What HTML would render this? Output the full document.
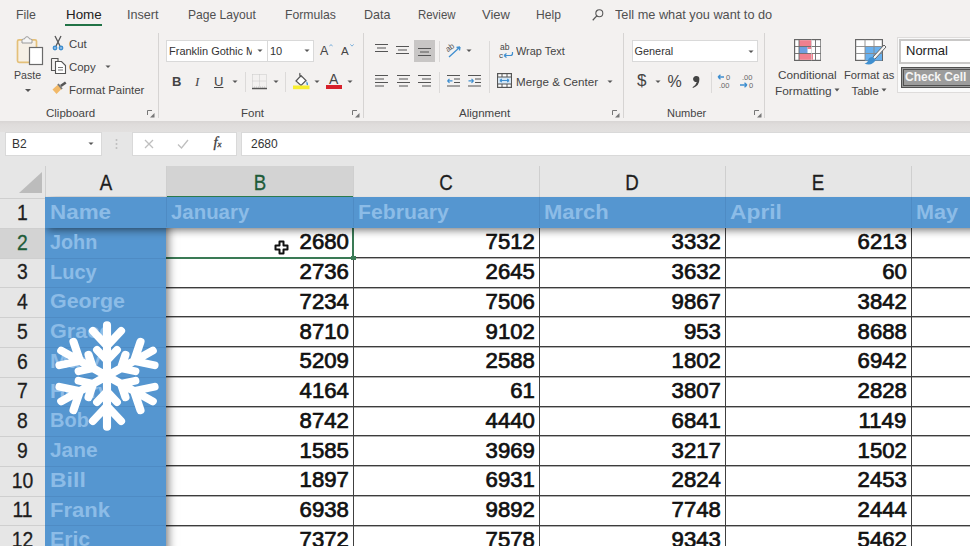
<!DOCTYPE html>
<html>
<head>
<meta charset="utf-8">
<title>Excel</title>
<style>
*{box-sizing:border-box;margin:0;padding:0}
html,body{width:970px;height:546px;overflow:hidden}
body{font-family:"Liberation Sans",sans-serif;background:#f3f1f0;position:relative;color:#444}
.abs{position:absolute}
.t{position:absolute;white-space:nowrap;line-height:1}
.tab{font-size:13px;color:#505050;top:8px;transform-origin:left center}
.rl{font-size:11.4px;color:#444}
.gl{font-size:11.5px;color:#444;top:108px}
.sep{position:absolute;top:33px;height:84.5px;width:1px;background:#d6d4d3}
.box{position:absolute;background:#fff;border:1px solid #d9d9d9}
.chl{font-size:21.5px;width:40px;text-align:center;transform:scaleX(.87);-webkit-text-stroke:.3px}
.rhl{font-size:22px;left:0;width:45px;text-align:center;transform:scaleX(.88);-webkit-text-stroke:.3px}
.num{font-size:21.5px;font-weight:normal;color:#111;-webkit-text-stroke:0.7px #111;transform:scaleX(1.03);transform-origin:right center}
.nm{font-size:20px;font-weight:bold;color:#8cbce7;transform-origin:left center}
</style>
</head>
<body>
<span class="t tab" style="left:16px;transform:scaleX(0.95)">File</span>
<span class="t tab" style="left:66px;color:#222;transform:scaleX(1.03)">Home</span>
<div class="abs" style="left:65px;top:24px;width:37px;height:2px;background:#217346"></div>
<span class="t tab" style="left:127px;transform:scaleX(0.97)">Insert</span>
<span class="t tab" style="left:188px;transform:scaleX(0.93)">Page Layout</span>
<span class="t tab" style="left:285px;transform:scaleX(0.94)">Formulas</span>
<span class="t tab" style="left:364px;transform:scaleX(0.96)">Data</span>
<span class="t tab" style="left:418px;transform:scaleX(0.88)">Review</span>
<span class="t tab" style="left:482px;transform:scaleX(1.00)">View</span>
<span class="t tab" style="left:536px;transform:scaleX(0.93)">Help</span>
<span class="t tab" style="left:615px;transform:scaleX(0.98)">Tell me what you want to do</span>
<!-- search icon -->
<svg class="abs" style="left:590.5px;top:7.5px" width="14" height="14" viewBox="0 0 16 16"><circle cx="9.5" cy="6" r="4" fill="none" stroke="#555" stroke-width="1.2"/><path d="M6.6 9 L2 14" stroke="#555" stroke-width="1.4"/></svg>

<!-- CLIPBOARD -->
<svg class="abs" style="left:15px;top:34px" width="30" height="33" viewBox="0 0 30 33">
<rect x="2.5" y="5.800" width="19" height="22.500" rx="1.500" fill="#f6f0e6" stroke="#e4c079" stroke-width="1.700"/>
<path d="M7 9 V6.500 Q7 5 8.500 5 H9.500 Q10 2.700 12 2.700 Q14 2.700 14.500 5 H15.500 Q17 5 17 6.500 V9 Z" fill="#f5f5f5" stroke="#9a9a9a" stroke-width="1"/>
<rect x="14.500" y="13.500" width="13" height="17" fill="#fff" stroke="#6a6a6a" stroke-width="1.200"/>
</svg>
<span class="t rl" style="left:14px;top:70px;transform:scaleX(.93);transform-origin:left">Paste</span>
<svg class="abs" style="left:24px;top:88px" width="8" height="5" viewBox="0 0 8 5"><path d="M1 1 L7 1 L4 4 Z" fill="#555"/></svg>

<svg class="abs" style="left:51px;top:35px" width="14" height="17" viewBox="0 0 14 17">
<path d="M4 1 L9 11 M10 1 L5 11" stroke="#555" stroke-width="1.300" fill="none"/>
<circle cx="4" cy="13" r="1.700" fill="#9cc4ea" stroke="#3f8fd0" stroke-width="1.400"/><circle cx="10" cy="13" r="1.700" fill="#9cc4ea" stroke="#3f8fd0" stroke-width="1.400"/>
</svg>
<span class="t rl" style="left:69px;top:38.5px">Cut</span>

<svg class="abs" style="left:50px;top:57px" width="17" height="18" viewBox="0 0 17 18">
<path d="M1.500 1.500 H8 V4 M1.500 1.500 V13.500 H5" fill="none" stroke="#555" stroke-width="1.100"/>
<path d="M5.500 4.500 H11.500 L15.500 8.500 V16.500 H5.500 Z" fill="#fff" stroke="#555" stroke-width="1.100"/>
<path d="M8 10.500 H13 M8 13 H13" stroke="#777" stroke-width="1"/>
</svg>
<span class="t rl" style="left:69px;top:61.5px">Copy</span>
<svg class="abs" style="left:104.5px;top:65.3px" width="6" height="3.4" viewBox="0 0 7 4"><path d="M0.500 0.500 L6.500 0.500 L3.500 3.500 Z" fill="#555"/></svg>

<svg class="abs" style="left:50px;top:80px" width="18" height="16" viewBox="0 0 18 16">
<path d="M10 5 L15 1.500 L16.500 3.500 L11.500 7 Z" fill="#555"/>
<path d="M2.500 9.500 L8 4.500 L11.500 9 L6.500 14 Z" fill="#f2b968"/>
<path d="M8 4 L12 9" stroke="#777" stroke-width="1.800"/>
</svg>
<span class="t rl" style="left:69px;top:84.5px">Format Painter</span>
<span class="t gl" style="left:46px">Clipboard</span>
<svg class="abs lch" style="left:147px;top:110px" width="8" height="8" viewBox="0 0 8 8"><path d="M0.500 5 V0.500 H5" fill="none" stroke="#777" stroke-width="1"/><path d="M3 7.500 H7.500 V3 Z" fill="#777"/></svg>
<div class="sep" style="left:158px"></div>

<!-- FONT -->
<div class="box" style="left:166px;top:40px;width:102px;height:22px"></div>
<div class="box" style="left:267px;top:40px;width:47px;height:22px"></div>
<span class="t rl" style="left:169px;top:46px;width:83px;overflow:hidden;font-size:11px;color:#333">Franklin Gothic M</span>
<svg class="abs" style="left:257px;top:49.3px" width="6" height="3.4" viewBox="0 0 7 4"><path d="M0.500 0.500 L6.500 0.500 L3.500 3.500 Z" fill="#555"/></svg>
<span class="t rl" style="left:270px;top:46px;font-size:11px;color:#333">10</span>
<svg class="abs" style="left:303.5px;top:49.3px" width="6" height="3.4" viewBox="0 0 7 4"><path d="M0.500 0.500 L6.500 0.500 L3.500 3.500 Z" fill="#555"/></svg>
<span class="t rl" style="left:320px;top:45px;font-size:12.5px">A</span>
<svg class="abs" style="left:328.5px;top:44px" width="4" height="2.7" viewBox="0 0 6 4"><path d="M0.500 3.500 L3 0.800 L5.500 3.500" fill="none" stroke="#3f8fd0" stroke-width="1"/></svg>
<span class="t rl" style="left:341px;top:46px;font-size:11.5px">A</span>
<svg class="abs" style="left:349.5px;top:44px" width="4" height="2.7" viewBox="0 0 6 4"><path d="M0.500 0.500 L3 3.200 L5.500 0.500" fill="none" stroke="#3f8fd0" stroke-width="1"/></svg>

<span class="t rl" style="left:172px;top:75px;font-size:13px;font-weight:bold">B</span>
<span class="t rl" style="left:195px;top:75px;font-size:13px;font-style:italic;font-family:'Liberation Serif',serif">I</span>
<span class="t rl" style="left:214px;top:75px;font-size:13px;text-decoration:underline">U</span>
<svg class="abs" style="left:231.5px;top:80.3px" width="6" height="3.4" viewBox="0 0 7 4"><path d="M0.500 0.500 L6.500 0.500 L3.500 3.500 Z" fill="#555"/></svg>
<div class="abs" style="left:245px;top:72px;width:1px;height:20px;background:#dcdad9"></div>
<svg class="abs" style="left:252px;top:74px" width="16" height="16" viewBox="0 0 16 16"><path d="M0.500 0.500 H14.500 V13 H0.500 Z M7.500 0.500 V13 M0.500 7 H14.500" fill="none" stroke="#c8c8c8" stroke-width="1" stroke-dasharray="1 1"/><path d="M0 14.500 H15" stroke="#555" stroke-width="1.500"/></svg>
<svg class="abs" style="left:272.5px;top:80.3px" width="6" height="3.4" viewBox="0 0 7 4"><path d="M0.500 0.500 L6.500 0.500 L3.500 3.500 Z" fill="#555"/></svg>
<div class="abs" style="left:285px;top:72px;width:1px;height:20px;background:#dcdad9"></div>
<svg class="abs" style="left:293px;top:72px" width="18" height="20" viewBox="0 0 18 20">
<path d="M3 9 L8 3.500 L13 8.500 L8 13.500 Z" fill="#fff" stroke="#555" stroke-width="1.200"/>
<path d="M7 1 Q6 4 8.500 5" fill="none" stroke="#555" stroke-width="1.100"/>
<path d="M13.500 9 Q16 12.500 14.500 13.500 Q13 13 13.500 9 Z" fill="#3f8fd0"/>
<rect x="0" y="13.500" width="16.500" height="3.700" fill="#f7ee2f"/>
</svg>
<svg class="abs" style="left:313.5px;top:80.3px" width="6" height="3.4" viewBox="0 0 7 4"><path d="M0.500 0.500 L6.500 0.500 L3.500 3.500 Z" fill="#555"/></svg>
<span class="t rl" style="left:329px;top:71.5px;font-size:14px">A</span>
<div class="abs" style="left:326px;top:85.2px;width:16px;height:3.700px;background:#d7202b"></div>
<svg class="abs" style="left:346.5px;top:80.3px" width="6" height="3.4" viewBox="0 0 7 4"><path d="M0.500 0.500 L6.500 0.500 L3.500 3.500 Z" fill="#555"/></svg>
<span class="t gl" style="left:241px">Font</span>
<svg class="abs lch" style="left:352px;top:110px" width="8" height="8" viewBox="0 0 8 8"><path d="M0.500 5 V0.500 H5" fill="none" stroke="#777" stroke-width="1"/><path d="M3 7.500 H7.500 V3 Z" fill="#777"/></svg>
<div class="sep" style="left:363px"></div>
<!-- ALIGNMENT -->
<div class="abs" style="left:414px;top:40px;width:21px;height:21.5px;background:#c8c6c5"></div>
<svg class="abs" style="left:375px;top:43px" width="14" height="14" viewBox="0 0 14 14"><path d="M0 1.500 H13 M2 5 H11 M0 8.500 H13" stroke="#555" stroke-width="1.200"/></svg>
<svg class="abs" style="left:396px;top:44px" width="14" height="14" viewBox="0 0 14 14"><path d="M0 2.500 H13 M2 6 H11 M0 9.500 H13" stroke="#555" stroke-width="1.200"/></svg>
<svg class="abs" style="left:418px;top:45px" width="14" height="14" viewBox="0 0 14 14"><path d="M0 3.500 H13 M2 7 H11 M0 10.500 H13" stroke="#555" stroke-width="1.200"/></svg>
<div class="abs" style="left:439px;top:41px;width:1px;height:21px;background:#dcdad9"></div>
<svg class="abs" style="left:446px;top:41px" width="18" height="18" viewBox="0 0 18 18">
<text x="1" y="9" font-family="Liberation Sans" font-size="8" fill="#555" transform="rotate(-35 5 9)">ab</text>
<path d="M3 16 L14 6 M14 6 L10.500 6.500 M14 6 L13.500 9.500" stroke="#3f8fd0" stroke-width="1.300" fill="none"/>
</svg>
<svg class="abs" style="left:465.5px;top:49.3px" width="6" height="3.4" viewBox="0 0 7 4"><path d="M0.500 0.500 L6.500 0.500 L3.500 3.500 Z" fill="#555"/></svg>
<div class="abs" style="left:489px;top:41px;width:1px;height:52px;background:#dcdad9"></div>
<svg class="abs" style="left:499px;top:42.5px" width="15" height="17" viewBox="0 0 15 17">
<text x="1" y="7" font-family="Liberation Sans" font-size="8.500" fill="#444">ab</text>
<text x="0" y="15" font-family="Liberation Sans" font-size="8" fill="#444">c</text>
<path d="M5 12.500 H11.500 Q13.500 12.500 13.500 10.500 V9 M5 12.500 L7.500 10.500 M5 12.500 L7.500 14.500" stroke="#3f8fd0" stroke-width="1.200" fill="none"/>
</svg>
<span class="t rl" style="left:515.5px;top:46.3px;transform:scaleX(.96);transform-origin:left">Wrap Text</span>

<svg class="abs" style="left:375px;top:74px" width="14" height="15" viewBox="0 0 14 15"><path d="M0 1.500 H13 M0 5 H9 M0 8.500 H13 M0 12 H9" stroke="#555" stroke-width="1.200"/></svg>
<svg class="abs" style="left:396.5px;top:74px" width="14" height="15" viewBox="0 0 14 15"><path d="M0 1.500 H13 M2 5 H11 M0 8.500 H13 M2 12 H11" stroke="#555" stroke-width="1.200"/></svg>
<svg class="abs" style="left:418px;top:74px" width="14" height="15" viewBox="0 0 14 15"><path d="M0 1.500 H13 M4 5 H13 M0 8.500 H13 M4 12 H13" stroke="#555" stroke-width="1.200"/></svg>
<div class="abs" style="left:439px;top:72px;width:1px;height:21px;background:#dcdad9"></div>
<svg class="abs" style="left:447px;top:74px" width="14" height="15" viewBox="0 0 14 15"><path d="M0 1.500 H13 M7 5 H13 M7 8.500 H13 M0 12 H13" stroke="#555" stroke-width="1.200"/><path d="M5.500 6.800 H0.500 M0.500 6.800 L2.500 4.800 M0.500 6.800 L2.500 8.800" stroke="#3f8fd0" stroke-width="1.200" fill="none"/></svg>
<svg class="abs" style="left:468px;top:74px" width="14" height="15" viewBox="0 0 14 15"><path d="M0 1.500 H13 M7 5 H13 M7 8.500 H13 M0 12 H13" stroke="#555" stroke-width="1.200"/><path d="M0.500 6.800 H5.500 M5.500 6.800 L3.500 4.800 M5.500 6.800 L3.500 8.800" stroke="#3f8fd0" stroke-width="1.200" fill="none"/></svg>
<svg class="abs" style="left:497px;top:73px" width="15" height="15" viewBox="0 0 15 15">
<rect x="0.600" y="0.600" width="13.800" height="13.800" fill="#fff" stroke="#555" stroke-width="1.200"/>
<rect x="1.200" y="4" width="12.600" height="7" fill="#d6e8f7"/>
<path d="M0.600 4 H14.400 M0.600 11 H14.400 M5 0.600 V4 M10 0.600 V4 M5 11 V14.400 M10 11 V14.400" stroke="#555" stroke-width="1"/>
<path d="M3 7.500 H12 M3 7.500 L4.800 6 M3 7.500 L4.800 9 M12 7.500 L10.200 6 M12 7.500 L10.200 9" stroke="#3f8fd0" stroke-width="1.100" fill="none"/>
</svg>
<span class="t rl" style="left:515.5px;top:76.5px;transform:scaleX(1.02);transform-origin:left">Merge &amp; Center</span>
<svg class="abs" style="left:606.5px;top:80.3px" width="6" height="3.4" viewBox="0 0 7 4"><path d="M0.500 0.500 L6.500 0.500 L3.500 3.500 Z" fill="#555"/></svg>
<span class="t gl" style="left:459px">Alignment</span>
<svg class="abs lch" style="left:611.5px;top:110px" width="8" height="8" viewBox="0 0 8 8"><path d="M0.500 5 V0.500 H5" fill="none" stroke="#777" stroke-width="1"/><path d="M3 7.500 H7.500 V3 Z" fill="#777"/></svg>
<div class="sep" style="left:623px"></div>

<!-- NUMBER -->
<div class="box" style="left:632px;top:40px;width:126px;height:22px"></div>
<span class="t rl" style="left:634.5px;top:46.3px;font-size:10.9px;color:#333">General</span>
<svg class="abs" style="left:747.5px;top:49.8px" width="6" height="3.4" viewBox="0 0 7 4"><path d="M0.500 0.500 L6.500 0.500 L3.500 3.500 Z" fill="#555"/></svg>
<span class="t rl" style="left:637px;top:72px;font-size:17px">$</span>
<svg class="abs" style="left:654.5px;top:80.3px" width="6" height="3.4" viewBox="0 0 7 4"><path d="M0.500 0.500 L6.500 0.500 L3.500 3.500 Z" fill="#555"/></svg>
<span class="t rl" style="left:667.5px;top:74px;font-size:16px">%</span>
<svg class="abs" style="left:690px;top:74px" width="12" height="16" viewBox="0 0 12 16"><path d="M6.300 2 A3 3 0 1 0 6.800 7.900 Q6 11 2.500 13.200 L3 14 Q9.500 11.500 9.400 5.200 A3.100 3.100 0 0 0 6.300 2 Z" fill="#444"/></svg>
<div class="abs" style="left:711px;top:72px;width:1px;height:21px;background:#dcdad9"></div>
<svg class="abs" style="left:717px;top:73px" width="17" height="17" viewBox="0 0 17 17">
<path d="M1 4 H7 M1 4 L3.500 1.800 M1 4 L3.500 6.200" stroke="#3f8fd0" stroke-width="1.300" fill="none"/>
<text x="9" y="7" font-family="Liberation Sans" font-size="7.500" fill="#666">0</text>
<text x="2" y="15" font-family="Liberation Sans" font-size="7.500" fill="#666">.00</text>
</svg>
<svg class="abs" style="left:739px;top:73px" width="17" height="17" viewBox="0 0 17 17">
<text x="3" y="7" font-family="Liberation Sans" font-size="7.500" fill="#666">.00</text>
<path d="M1 12 H8 M8 12 L5.500 9.800 M8 12 L5.500 14.200" stroke="#3f8fd0" stroke-width="1.300" fill="none"/>
<text x="10" y="15" font-family="Liberation Sans" font-size="7.500" fill="#666">0</text>
</svg>
<span class="t gl" style="left:666.5px;transform:scaleX(.96);transform-origin:left">Number</span>
<svg class="abs lch" style="left:753.5px;top:110px" width="8" height="8" viewBox="0 0 8 8"><path d="M0.500 5 V0.500 H5" fill="none" stroke="#777" stroke-width="1"/><path d="M3 7.500 H7.500 V3 Z" fill="#777"/></svg>
<div class="sep" style="left:764px"></div>

<!-- STYLES -->
<svg class="abs" style="left:793.5px;top:39px" width="27.5" height="22" viewBox="0 0 27.5 22">
<rect x="0.600" y="0.600" width="26.300" height="20.800" fill="#fff" stroke="#666" stroke-width="1.200"/>
<rect x="5" y="1.200" width="12.500" height="6.300" fill="#f0808f"/>
<rect x="5" y="7.500" width="8.500" height="7" fill="#6f9fe0"/>
<rect x="13.500" y="7.500" width="4" height="2.500" fill="#f0808f"/>
<rect x="5" y="14.500" width="14" height="6.300" fill="#f0808f"/>
<path d="M5 0.600 V21.400 M21.500 0.600 V21.400 M0.600 7.500 H26.900 M0.600 14.500 H26.900" stroke="#6a6a6a" stroke-width="0.900" fill="none"/>
<path d="M17.500 0.600 V21.400" stroke="#d0d0d0" stroke-width="0.700"/>
</svg>
<span class="t rl" style="left:777.5px;top:70px;transform:scaleX(1.03);transform-origin:left">Conditional</span>
<span class="t rl" style="left:774.5px;top:86px;transform:scaleX(1.04);transform-origin:left">Formatting</span>
<svg class="abs" style="left:833.5px;top:88px" width="6" height="4" viewBox="0 0 6 4"><path d="M0.500 0.500 L5.500 0.500 L3 3.500 Z" fill="#555"/></svg>
<svg class="abs" style="left:855px;top:39px" width="32" height="27" viewBox="0 0 32 27">
<rect x="0.600" y="0.600" width="26.800" height="20.800" fill="#fff" stroke="#666" stroke-width="1.200"/>
<rect x="10" y="7.500" width="17" height="14" fill="#68b0ee"/>
<path d="M10 0.600 V21.400 M19 0.600 V21.400 M0.600 7.500 H27.400 M0.600 14.500 H27.400" stroke="#888" stroke-width="0.900" fill="none"/>
<path d="M29 6 L31 8 L20 20 L17 21 L18 18 Z" fill="#f5f5f5" stroke="#666" stroke-width="1"/>
<path d="M18 18 Q13 18 13 22 Q11 25 9 24 Q14 27 18 24 Q21 22 20 20 Z" fill="#3f8fd0"/>
</svg>
<span class="t rl" style="left:843.5px;top:70px;transform:scaleX(.98);transform-origin:left">Format as</span>
<span class="t rl" style="left:851.5px;top:86px">Table</span>
<svg class="abs" style="left:880.5px;top:88px" width="6" height="4" viewBox="0 0 6 4"><path d="M0.500 0.500 L5.500 0.500 L3 3.500 Z" fill="#555"/></svg>

<div class="abs" style="left:897px;top:37px;width:80px;height:56px;background:#fafafa;border:1px solid #dedcdb"></div>
<div class="abs" style="left:899px;top:38.5px;width:80px;height:25px;background:#fff;border:2px solid #c9c8c7"></div>
<span class="t" style="left:906px;top:44px;font-size:13px;color:#222">Normal</span>
<div class="abs" style="left:901px;top:67px;width:80px;height:21px;background:#9c9c9c;border:3px double #505050"></div>
<span class="t" style="left:905px;top:71px;font-size:12px;font-weight:bold;color:#f4f4f4">Check Cell</span>
<div class="abs" style="left:0;top:120.5px;width:970px;height:12px;background:linear-gradient(#d8d5d4,#dfdcdb 30%,#e3e1e0 100%)"></div>
<div class="abs" style="left:0;top:132px;width:970px;height:34px;background:#e6e6e6"></div>
<div class="box" style="left:5px;top:132px;width:97px;height:24px"></div>
<span class="t" style="left:12px;top:138px;font-size:12px;color:#333">B2</span>
<svg class="abs" style="left:87.5px;top:142.3px" width="6" height="3.4" viewBox="0 0 7 4"><path d="M0.500 0.500 L6.500 0.500 L3.500 3.500 Z" fill="#555"/></svg>
<svg class="abs" style="left:115px;top:138px" width="3" height="12" viewBox="0 0 3 12"><circle cx="1.500" cy="2" r="1" fill="#bdbdbd"/><circle cx="1.500" cy="6" r="1" fill="#bdbdbd"/><circle cx="1.500" cy="10" r="1" fill="#bdbdbd"/></svg>
<div class="box" style="left:132px;top:132px;width:105px;height:24px"></div>
<svg class="abs" style="left:144px;top:139px" width="10" height="10" viewBox="0 0 10 10"><path d="M1 1 L9 9 M9 1 L1 9" stroke="#bfbfbf" stroke-width="1.300"/></svg>
<svg class="abs" style="left:177px;top:139px" width="12" height="10" viewBox="0 0 12 10"><path d="M1 5.500 L4.500 9 L11 1" fill="none" stroke="#bfbfbf" stroke-width="1.300"/></svg>
<span class="t" style="left:213.5px;top:135px;font-size:14.5px;color:#3c3c3c;font-style:italic;-webkit-text-stroke:.3px;font-family:'Liberation Serif',serif">f<span style="font-size:9px">x</span></span>
<div class="box" style="left:241px;top:132px;width:740px;height:24px"></div>
<span class="t" style="left:251px;top:138px;font-size:12px;color:#333">2680</span>
<div class="abs" style="left:0;top:166px;width:970px;height:380px;background:#fff"></div>
<div class="abs" style="left:0;top:166px;width:970px;height:31px;background:#e6e6e6"></div>
<div class="abs" style="left:0;top:166px;width:45px;height:380px;background:#e6e6e6"></div>
<div class="abs" style="left:166px;top:166px;width:187px;height:30.5px;background:#d3d3d3;border-bottom:1.5px solid #2e7d4f"></div>
<div class="abs" style="left:0;top:227.75px;width:45px;height:29.75px;background:#d3d3d3"></div>
<svg class="abs" style="left:19px;top:172px" width="23" height="21" viewBox="0 0 23 21"><path d="M23 0 L23 21 L0 21 Z" fill="#bcbcbc"/></svg>
<div class="abs" style="left:45px;top:166px;width:1px;height:31px;background:#cfcfcf"></div>
<div class="abs" style="left:166px;top:166px;width:1px;height:31px;background:#cfcfcf"></div>
<div class="abs" style="left:353px;top:166px;width:1px;height:31px;background:#cfcfcf"></div>
<div class="abs" style="left:539px;top:166px;width:1px;height:31px;background:#cfcfcf"></div>
<div class="abs" style="left:725px;top:166px;width:1px;height:31px;background:#cfcfcf"></div>
<div class="abs" style="left:911px;top:166px;width:1px;height:31px;background:#cfcfcf"></div>
<span class="t chl" style="left:85.5px;top:172.5px;color:#1e1e1e">A</span>
<span class="t chl" style="left:239.5px;top:172.5px;color:#1f5c3a">B</span>
<span class="t chl" style="left:426.0px;top:172.5px;color:#1e1e1e">C</span>
<span class="t chl" style="left:612.0px;top:172.5px;color:#1e1e1e">D</span>
<span class="t chl" style="left:798.0px;top:172.5px;color:#1e1e1e">E</span>
<div class="abs" style="left:0;top:198.00px;width:45px;height:1px;background:#cfcfcf"></div>
<span class="t rhl" style="top:201.80px;color:#1e1e1e">1</span>
<div class="abs" style="left:0;top:227.75px;width:45px;height:1px;background:#cfcfcf"></div>
<span class="t rhl" style="top:231.55px;color:#1f5c3a">2</span>
<div class="abs" style="left:0;top:257.50px;width:45px;height:1px;background:#cfcfcf"></div>
<span class="t rhl" style="top:261.30px;color:#1e1e1e">3</span>
<div class="abs" style="left:0;top:287.25px;width:45px;height:1px;background:#cfcfcf"></div>
<span class="t rhl" style="top:291.05px;color:#1e1e1e">4</span>
<div class="abs" style="left:0;top:317.00px;width:45px;height:1px;background:#cfcfcf"></div>
<span class="t rhl" style="top:320.80px;color:#1e1e1e">5</span>
<div class="abs" style="left:0;top:346.75px;width:45px;height:1px;background:#cfcfcf"></div>
<span class="t rhl" style="top:350.55px;color:#1e1e1e">6</span>
<div class="abs" style="left:0;top:376.50px;width:45px;height:1px;background:#cfcfcf"></div>
<span class="t rhl" style="top:380.30px;color:#1e1e1e">7</span>
<div class="abs" style="left:0;top:406.25px;width:45px;height:1px;background:#cfcfcf"></div>
<span class="t rhl" style="top:410.05px;color:#1e1e1e">8</span>
<div class="abs" style="left:0;top:436.00px;width:45px;height:1px;background:#cfcfcf"></div>
<span class="t rhl" style="top:439.80px;color:#1e1e1e">9</span>
<div class="abs" style="left:0;top:465.75px;width:45px;height:1px;background:#cfcfcf"></div>
<span class="t rhl" style="top:469.55px;color:#1e1e1e">10</span>
<div class="abs" style="left:0;top:495.50px;width:45px;height:1px;background:#cfcfcf"></div>
<span class="t rhl" style="top:499.30px;color:#1e1e1e">11</span>
<div class="abs" style="left:0;top:525.25px;width:45px;height:1px;background:#cfcfcf"></div>
<span class="t rhl" style="top:529.05px;color:#1e1e1e">12</span>
<div class="abs" style="left:166px;top:257px;width:804px;height:2px;background:linear-gradient(#3c3c3c 50%,rgba(60,60,60,.4) 50%)"></div>
<div class="abs" style="left:166px;top:287px;width:804px;height:2px;background:linear-gradient(#3c3c3c 50%,rgba(60,60,60,.4) 50%)"></div>
<div class="abs" style="left:166px;top:316px;width:804px;height:2px;background:linear-gradient(#3c3c3c 50%,rgba(60,60,60,.4) 50%)"></div>
<div class="abs" style="left:166px;top:346px;width:804px;height:2px;background:linear-gradient(#3c3c3c 50%,rgba(60,60,60,.4) 50%)"></div>
<div class="abs" style="left:166px;top:376px;width:804px;height:2px;background:linear-gradient(#3c3c3c 50%,rgba(60,60,60,.4) 50%)"></div>
<div class="abs" style="left:166px;top:406px;width:804px;height:2px;background:linear-gradient(#3c3c3c 50%,rgba(60,60,60,.4) 50%)"></div>
<div class="abs" style="left:166px;top:435px;width:804px;height:2px;background:linear-gradient(#3c3c3c 50%,rgba(60,60,60,.4) 50%)"></div>
<div class="abs" style="left:166px;top:465px;width:804px;height:2px;background:linear-gradient(#3c3c3c 50%,rgba(60,60,60,.4) 50%)"></div>
<div class="abs" style="left:166px;top:495px;width:804px;height:2px;background:linear-gradient(#3c3c3c 50%,rgba(60,60,60,.4) 50%)"></div>
<div class="abs" style="left:166px;top:525px;width:804px;height:2px;background:linear-gradient(#3c3c3c 50%,rgba(60,60,60,.4) 50%)"></div>
<div class="abs" style="left:166px;top:554px;width:804px;height:2px;background:linear-gradient(#3c3c3c 50%,rgba(60,60,60,.4) 50%)"></div>
<div class="abs" style="left:352.5px;top:227px;width:1.5px;height:320px;background:#404040"></div>
<div class="abs" style="left:538.5px;top:227px;width:1.5px;height:320px;background:#404040"></div>
<div class="abs" style="left:724.5px;top:227px;width:1.5px;height:320px;background:#404040"></div>
<div class="abs" style="left:910.5px;top:227px;width:1.5px;height:320px;background:#404040"></div>
<span class="t num" style="right:621.3px;top:232.35px">2680</span>
<span class="t num" style="right:435.3px;top:232.35px">7512</span>
<span class="t num" style="right:249.3px;top:232.35px">3332</span>
<span class="t num" style="right:63.3px;top:232.35px">6213</span>
<span class="t num" style="right:621.3px;top:262.10px">2736</span>
<span class="t num" style="right:435.3px;top:262.10px">2645</span>
<span class="t num" style="right:249.3px;top:262.10px">3632</span>
<span class="t num" style="right:63.3px;top:262.10px">60</span>
<span class="t num" style="right:621.3px;top:291.85px">7234</span>
<span class="t num" style="right:435.3px;top:291.85px">7506</span>
<span class="t num" style="right:249.3px;top:291.85px">9867</span>
<span class="t num" style="right:63.3px;top:291.85px">3842</span>
<span class="t num" style="right:621.3px;top:321.60px">8710</span>
<span class="t num" style="right:435.3px;top:321.60px">9102</span>
<span class="t num" style="right:249.3px;top:321.60px">953</span>
<span class="t num" style="right:63.3px;top:321.60px">8688</span>
<span class="t num" style="right:621.3px;top:351.35px">5209</span>
<span class="t num" style="right:435.3px;top:351.35px">2588</span>
<span class="t num" style="right:249.3px;top:351.35px">1802</span>
<span class="t num" style="right:63.3px;top:351.35px">6942</span>
<span class="t num" style="right:621.3px;top:381.10px">4164</span>
<span class="t num" style="right:435.3px;top:381.10px">61</span>
<span class="t num" style="right:249.3px;top:381.10px">3807</span>
<span class="t num" style="right:63.3px;top:381.10px">2828</span>
<span class="t num" style="right:621.3px;top:410.85px">8742</span>
<span class="t num" style="right:435.3px;top:410.85px">4440</span>
<span class="t num" style="right:249.3px;top:410.85px">6841</span>
<span class="t num" style="right:63.3px;top:410.85px">1149</span>
<span class="t num" style="right:621.3px;top:440.60px">1585</span>
<span class="t num" style="right:435.3px;top:440.60px">3969</span>
<span class="t num" style="right:249.3px;top:440.60px">3217</span>
<span class="t num" style="right:63.3px;top:440.60px">1502</span>
<span class="t num" style="right:621.3px;top:470.35px">1897</span>
<span class="t num" style="right:435.3px;top:470.35px">6931</span>
<span class="t num" style="right:249.3px;top:470.35px">2824</span>
<span class="t num" style="right:63.3px;top:470.35px">2453</span>
<span class="t num" style="right:621.3px;top:500.10px">6938</span>
<span class="t num" style="right:435.3px;top:500.10px">9892</span>
<span class="t num" style="right:249.3px;top:500.10px">7748</span>
<span class="t num" style="right:63.3px;top:500.10px">2444</span>
<span class="t num" style="right:621.3px;top:529.85px">7372</span>
<span class="t num" style="right:435.3px;top:529.85px">7578</span>
<span class="t num" style="right:249.3px;top:529.85px">9343</span>
<span class="t num" style="right:63.3px;top:529.85px">5462</span>
<div class="abs" style="left:166px;top:227.75px;width:188px;height:31.25px;border-right:2px solid #3a7a55;border-bottom:2.2px solid #3a7a55"></div>
<div class="abs" style="left:351px;top:255.50px;width:4.5px;height:4.5px;background:#3a7a55"></div>
<div class="abs" style="left:45px;top:196.5px;width:121px;height:360px;background:#5596d0;box-shadow:4px 0 9px -2px rgba(0,0,0,.55);clip-path:inset(0 -20px 0 0)"></div>
<div class="abs" style="left:45px;top:257.50px;width:121px;height:1px;background:#4e8bc4"></div>
<div class="abs" style="left:45px;top:287.25px;width:121px;height:1px;background:#4e8bc4"></div>
<div class="abs" style="left:45px;top:317.00px;width:121px;height:1px;background:#4e8bc4"></div>
<div class="abs" style="left:45px;top:346.75px;width:121px;height:1px;background:#4e8bc4"></div>
<div class="abs" style="left:45px;top:376.50px;width:121px;height:1px;background:#4e8bc4"></div>
<div class="abs" style="left:45px;top:406.25px;width:121px;height:1px;background:#4e8bc4"></div>
<div class="abs" style="left:45px;top:436.00px;width:121px;height:1px;background:#4e8bc4"></div>
<div class="abs" style="left:45px;top:465.75px;width:121px;height:1px;background:#4e8bc4"></div>
<div class="abs" style="left:45px;top:495.50px;width:121px;height:1px;background:#4e8bc4"></div>
<div class="abs" style="left:45px;top:525.25px;width:121px;height:1px;background:#4e8bc4"></div>
<div class="abs" style="left:45px;top:196.5px;width:960px;height:31px;background:#5596d0;box-shadow:0 4px 9px -2px rgba(0,0,0,.55);clip-path:inset(0 0 -20px 0)"></div>
<div class="abs" style="left:166px;top:197px;width:1px;height:30px;background:#4e8bc4"></div>
<div class="abs" style="left:353px;top:197px;width:1px;height:30px;background:#4e8bc4"></div>
<div class="abs" style="left:539px;top:197px;width:1px;height:30px;background:#4e8bc4"></div>
<div class="abs" style="left:725px;top:197px;width:1px;height:30px;background:#4e8bc4"></div>
<div class="abs" style="left:911px;top:197px;width:1px;height:30px;background:#4e8bc4"></div>
<span class="t nm" style="left:50px;top:202.10px;transform:scaleX(1.120)">Name</span>
<span class="t nm" style="left:50px;top:231.85px;transform:scaleX(0.990)">John</span>
<span class="t nm" style="left:50px;top:261.60px;transform:scaleX(1.000)">Lucy</span>
<span class="t nm" style="left:50px;top:291.35px;transform:scaleX(1.070)">George</span>
<span class="t nm" style="left:50px;top:321.10px;transform:scaleX(1.080)">Grace</span>
<span class="t nm" style="left:50px;top:350.85px;transform:scaleX(1.080)">Mary</span>
<span class="t nm" style="left:50px;top:380.60px;transform:scaleX(1.050)">Henry</span>
<span class="t nm" style="left:50px;top:410.35px;transform:scaleX(1.000)">Bob</span>
<span class="t nm" style="left:50px;top:440.10px;transform:scaleX(1.045)">Jane</span>
<span class="t nm" style="left:50px;top:469.85px;transform:scaleX(1.150)">Bill</span>
<span class="t nm" style="left:50px;top:499.60px;transform:scaleX(1.100)">Frank</span>
<span class="t nm" style="left:50px;top:529.35px;transform:scaleX(1.060)">Eric</span>
<span class="t nm" style="left:170.5px;top:202.10px;transform:scaleX(1.020)">January</span>
<span class="t nm" style="left:357.5px;top:202.10px;transform:scaleX(1.060)">February</span>
<span class="t nm" style="left:543.5px;top:202.10px;transform:scaleX(1.100)">March</span>
<span class="t nm" style="left:729.5px;top:202.10px;transform:scaleX(1.140)">April</span>
<span class="t nm" style="left:915.5px;top:202.10px;transform:scaleX(1.080)">May</span><!-- snowflake -->
<svg class="abs" style="left:46.900px;top:316.400px" width="120" height="120" viewBox="-60 -60 120 120">
<g stroke="#fff" stroke-width="7.800" stroke-linecap="round" fill="none" transform="scale(1.040 1)">
<path transform="rotate(0)" d="M0 0 V-50.800 M0 -30 L-13.500 -45 M0 -30 L13.500 -45 M0 -15.500 L-9.500 -26 M0 -15.500 L9.500 -26"/>
<path transform="rotate(60)" d="M0 0 V-50.800 M0 -30 L-13.500 -45 M0 -30 L13.500 -45 M0 -15.500 L-9.500 -26 M0 -15.500 L9.500 -26"/>
<path transform="rotate(120)" d="M0 0 V-50.800 M0 -30 L-13.500 -45 M0 -30 L13.500 -45 M0 -15.500 L-9.500 -26 M0 -15.500 L9.500 -26"/>
<path transform="rotate(180)" d="M0 0 V-50.800 M0 -30 L-13.500 -45 M0 -30 L13.500 -45 M0 -15.500 L-9.500 -26 M0 -15.500 L9.500 -26"/>
<path transform="rotate(240)" d="M0 0 V-50.800 M0 -30 L-13.500 -45 M0 -30 L13.500 -45 M0 -15.500 L-9.500 -26 M0 -15.500 L9.500 -26"/>
<path transform="rotate(300)" d="M0 0 V-50.800 M0 -30 L-13.500 -45 M0 -30 L13.500 -45 M0 -15.500 L-9.500 -26 M0 -15.500 L9.500 -26"/>
</g>
</svg>
<!-- cursor -->
<svg class="abs" style="left:274.1px;top:239.7px" width="15" height="15" viewBox="0 0 15 15">
<path d="M5.500 1.500 H9.500 V5.500 H13.500 V9.500 H9.500 V13.500 H5.500 V9.500 H1.500 V5.500 H5.500 Z" fill="#fff" stroke="#111" stroke-width="2" stroke-linejoin="round"/>
</svg>
</body></html>
